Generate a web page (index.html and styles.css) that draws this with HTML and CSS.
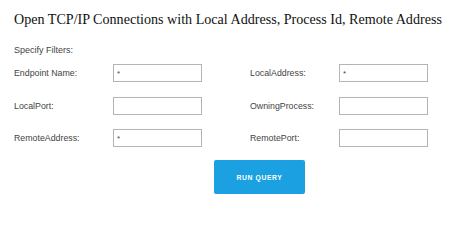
FILE: index.html
```html
<!DOCTYPE html>
<html>
<head>
<meta charset="utf-8">
<link rel="stylesheet" href="styles.css">
</head>
<body>
<div class="page">
  <h1 class="title">Open TCP/IP Connections with Local Address, Process Id, Remote Address</h1>
  <div class="subtitle">Specify Filters:</div>
  <div class="filters">
    <label class="lbl">Endpoint Name:</label>
    <input class="field" type="text" value="*">
    <label class="lbl">LocalAddress:</label>
    <input class="field" type="text" value="*">
    <label class="lbl">LocalPort:</label>
    <input class="field" type="text" value="">
    <label class="lbl">OwningProcess:</label>
    <input class="field" type="text" value="">
    <label class="lbl">RemoteAddress:</label>
    <input class="field" type="text" value="*">
    <label class="lbl">RemotePort:</label>
    <input class="field" type="text" value="">
  </div>
  <div class="actions">
    <button class="run">RUN QUERY</button>
  </div>
</div>
</body>
</html>
```
FILE: styles.css
```css
html, body {
  margin: 0;
  padding: 0;
  background: #ffffff;
}
.page {
  padding: 10px 0 0 14px;
}
.title {
  margin: 0;
  font-family: "Liberation Serif", "Times New Roman", serif;
  font-weight: normal;
  font-size: 14.1px;
  line-height: 19px;
  white-space: nowrap;
  color: #111;
}
.subtitle {
  margin-top: 16px;
  font-family: "Liberation Sans", Arial, sans-serif;
  font-size: 9px;
  line-height: 11px;
  color: #444;
}
.filters {
  margin-top: 8px;
  display: grid;
  grid-template-columns: 99px 89px 137px 89px;
  grid-auto-rows: 18px;
  row-gap: 14.5px;
  align-items: center;
}
.filters .lbl:nth-of-type(2n) {
  padding-left: 48px;
}
.lbl {
  font-family: "Liberation Sans", Arial, sans-serif;
  font-size: 8.8px;
  color: #444;
}
.field {
  box-sizing: border-box;
  width: 89px;
  height: 18px;
  margin: 0;
  padding: 0 0 0 3px;
  border: 1px solid #b4b4b4;
  font-family: "Liberation Sans", Arial, sans-serif;
  font-size: 8px;
  color: #444;
  outline: none;
}
.actions {
  margin-top: 13px;
  padding-left: 200px;
}
.run {
  width: 91px;
  height: 34px;
  border: none;
  border-radius: 2px;
  background: #1ba1e2;
  color: #ffffff;
  font-family: "Liberation Sans", Arial, sans-serif;
  font-weight: bold;
  font-size: 6.8px;
  letter-spacing: 0.6px;
  padding: 0;
}
```
